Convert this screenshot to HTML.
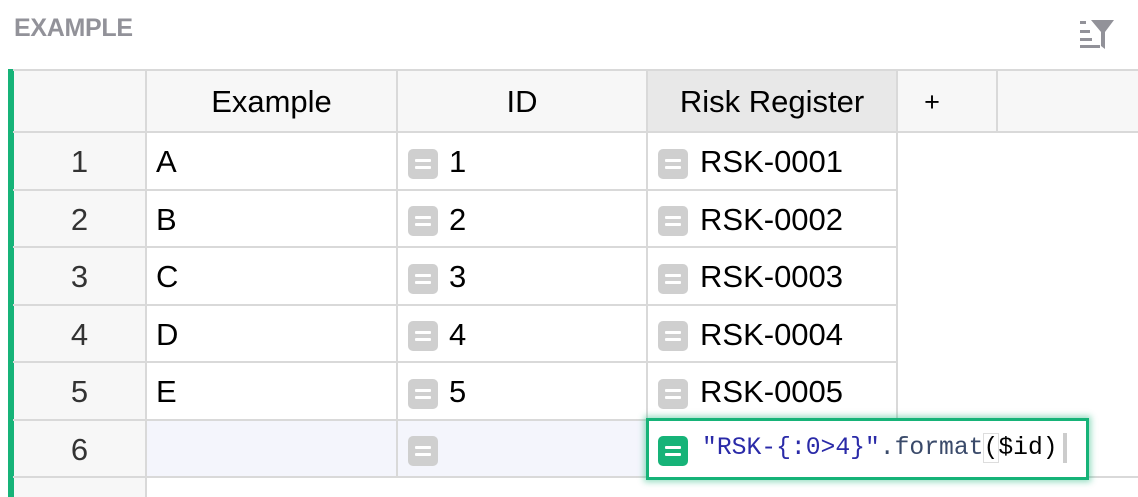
<!DOCTYPE html>
<html><head><style>
body{margin:0;width:1138px;height:497px;background:#fff;position:relative;overflow:hidden;font-family:"Liberation Sans",sans-serif}
.a{position:absolute}
.t{font-size:31px;color:#000;line-height:34px}
.hl{background:#d9d9d9}
.ic{position:absolute;width:30px;height:30px;border-radius:5px;background:#cfcfcf}
.ic:before,.ic:after{content:"";position:absolute;left:7px;width:16px;height:3px;background:#fff;border-radius:1px}
.ic:before{top:10px}.ic:after{top:17px}
</style></head><body>
<div class="a" style="left:14px;top:14px;font-size:25px;font-weight:bold;color:#929299;letter-spacing:-0.3px">EXAMPLE</div>
<svg class="a" style="left:1078px;top:18px" width="40" height="32" viewBox="0 0 40 32">
<rect x="2" y="3" width="6" height="3" fill="#929299"/><rect x="2" y="12" width="10" height="3" fill="#929299"/><rect x="2" y="20" width="12" height="3" fill="#929299"/><rect x="2" y="27" width="20" height="3" fill="#929299"/>
<path d="M13 2 H36 L27 14 V31 L23 28 V14 Z" fill="#929299"/></svg>
<div class="a" style="left:13px;top:69px;width:1125px;height:63px;background:#f7f7f7"></div>
<div class="a" style="left:647px;top:69px;width:250px;height:63px;background:#e8e8e8"></div>
<div class="a" style="left:13px;top:132px;width:133px;height:365px;background:#f7f7f7"></div>
<div class="a" style="left:146px;top:420px;width:501px;height:57px;background:#f4f5fc"></div>
<div class="a" style="left:8px;top:69px;width:6px;height:428px;background:#16b378"></div>
<div class="a hl" style="left:13px;top:69px;width:1125px;height:2px"></div>
<div class="a hl" style="left:13px;top:131px;width:1125px;height:2px"></div>
<div class="a hl" style="left:13px;top:189px;width:884px;height:2px"></div>
<div class="a hl" style="left:13px;top:246px;width:884px;height:2px"></div>
<div class="a hl" style="left:13px;top:304px;width:884px;height:2px"></div>
<div class="a hl" style="left:13px;top:361px;width:884px;height:2px"></div>
<div class="a hl" style="left:13px;top:419px;width:884px;height:2px"></div>
<div class="a hl" style="left:13px;top:476px;width:1125px;height:2px"></div>
<div class="a hl" style="left:145px;top:69px;width:2px;height:428px"></div>
<div class="a hl" style="left:396px;top:69px;width:2px;height:407px"></div>
<div class="a hl" style="left:646px;top:69px;width:2px;height:407px"></div>
<div class="a hl" style="left:896px;top:69px;width:2px;height:350px"></div>
<div class="a hl" style="left:996px;top:69px;width:2px;height:63px"></div>
<div class="a t" style="left:146px;width:251px;top:85px;text-align:center">Example</div>
<div class="a t" style="left:397px;width:250px;top:85px;text-align:center">ID</div>
<div class="a t" style="left:647px;width:250px;top:85px;text-align:center">Risk Register</div>
<div class="a t" style="left:897px;width:70px;top:85px;text-align:center;font-size:27px">+</div>
<div class="a t" style="left:13px;width:133px;top:145px;text-align:center;color:#333">1</div>
<div class="a t" style="left:13px;width:133px;top:203px;text-align:center;color:#333">2</div>
<div class="a t" style="left:13px;width:133px;top:260px;text-align:center;color:#333">3</div>
<div class="a t" style="left:13px;width:133px;top:318px;text-align:center;color:#333">4</div>
<div class="a t" style="left:13px;width:133px;top:375px;text-align:center;color:#333">5</div>
<div class="a t" style="left:13px;width:133px;top:433px;text-align:center;color:#333">6</div>
<div class="a t" style="left:156px;top:145px">A</div>
<div class="a t" style="left:156px;top:203px">B</div>
<div class="a t" style="left:156px;top:260px">C</div>
<div class="a t" style="left:156px;top:318px">D</div>
<div class="a t" style="left:156px;top:375px">E</div>
<div class="ic" style="left:408px;top:149px"></div><div class="a t" style="left:449px;top:145px">1</div>
<div class="ic" style="left:408px;top:206px"></div><div class="a t" style="left:449px;top:203px">2</div>
<div class="ic" style="left:408px;top:264px"></div><div class="a t" style="left:449px;top:260px">3</div>
<div class="ic" style="left:408px;top:321px"></div><div class="a t" style="left:449px;top:318px">4</div>
<div class="ic" style="left:408px;top:379px"></div><div class="a t" style="left:449px;top:375px">5</div>
<div class="ic" style="left:408px;top:436px"></div>
<div class="ic" style="left:658px;top:149px"></div><div class="a t" style="left:700px;top:145px">RSK-0001</div>
<div class="ic" style="left:658px;top:206px"></div><div class="a t" style="left:700px;top:203px">RSK-0002</div>
<div class="ic" style="left:658px;top:264px"></div><div class="a t" style="left:700px;top:260px">RSK-0003</div>
<div class="ic" style="left:658px;top:321px"></div><div class="a t" style="left:700px;top:318px">RSK-0004</div>
<div class="ic" style="left:658px;top:379px"></div><div class="a t" style="left:700px;top:375px">RSK-0005</div>
<div class="a" style="left:646px;top:418px;width:437px;height:56px;border:3px solid #16b378;background:#fff;box-shadow:0 0 6px 2px rgba(22,179,120,0.45)"></div>
<div class="ic" style="left:658px;top:436px;background:#16b378"></div>
<div class="a" style="left:702px;top:433px;font-family:'Liberation Mono','DejaVu Sans Mono',monospace;font-size:24.7px;line-height:30px;white-space:pre"><span style="color:#2a2aa8">"RSK-{:0&gt;4}"</span><span style="color:#3a4a6a">.format</span><span style="color:#000;outline:1px solid #ddd">(</span><span style="color:#000">$id)</span></div>
<div class="a" style="left:1063px;top:433px;width:4px;height:30px;background:#ccc"></div>
</body></html>
